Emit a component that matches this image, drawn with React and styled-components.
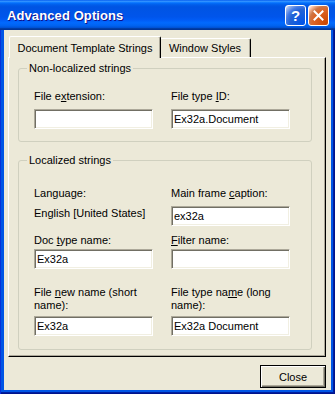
import React from "react";
import styled, { createGlobalStyle } from "styled-components";

const GlobalStyle = createGlobalStyle`
  html, body {
    margin: 0;
    padding: 0;
    background: #ffffff;
  }
  body {
    font-family: "Liberation Sans", Arial, sans-serif;
    font-size: 11px;
    color: #000;
  }
`;

const Window = styled.div`
  width: 335px;
  height: 394px;
  display: flex;
  flex-direction: column;
`;

const TitleBar = styled.div`
  height: 30px;
  box-sizing: border-box;
  display: flex;
  align-items: center;
  padding: 1px 6px 0 7px;
  background: linear-gradient(
    to bottom,
    #0058ee 0%,
    #3593ff 4%,
    #288eff 6%,
    #127dff 8%,
    #036ffc 10%,
    #0262ee 14%,
    #0057e5 20%,
    #0054e3 24%,
    #0055eb 56%,
    #005bf5 66%,
    #026afe 76%,
    #0062ef 86%,
    #0052d6 92%,
    #0040ab 94%,
    #003092 100%
  );
`;

const Title = styled.div`
  flex: 1;
  color: #fff;
  font-family: "Liberation Sans", Arial, sans-serif;
  font-weight: bold;
  font-size: 13px;
  letter-spacing: 0.1px;
  text-shadow: 1px 1px #0f1089;
`;

const CaptionButtons = styled.div`
  display: flex;
  gap: 2px;
`;

const CaptionButton = styled.div`
  width: 21px;
  height: 21px;
  box-sizing: border-box;
  border: 1px solid #fff;
  border-radius: 3px;
  display: flex;
  align-items: center;
  justify-content: center;
  color: #fff;
  font-weight: bold;
  font-size: 15px;
  font-family: "Liberation Sans", Arial, sans-serif;
  background: ${(p) =>
    p.$close
      ? "radial-gradient(circle at 90% 90%, #cc4600 0%, #dc6527 55%, #cd7546 70%, #ffccb2 90%, #fff 100%)"
      : "radial-gradient(circle at 90% 90%, #0054e9 0%, #2263d5 55%, #4479e4 70%, #a3bbec 90%, #fff 100%)"};
`;

const Frame = styled.div`
  flex: 1;
  display: flex;
  padding: 0 4px 4px;
  background: #0055e5;
  box-shadow: inset 1px 0 #0831d9, inset -1px 0 #00138c, inset 0 -1px #00138c,
    inset -2px -2px #001ea0;
`;

const Body = styled.div`
  flex: 1;
  display: flex;
  flex-direction: column;
  background: #ece9d8;
  padding: 6px 5px 0 4px;
`;

const TabStrip = styled.div`
  display: flex;
  align-items: flex-end;
  height: 21px;
  padding-left: 3px;
`;

const Tab = styled.div`
  box-sizing: border-box;
  width: ${(p) => p.$w}px;
  height: ${(p) => (p.$active ? 22 : 19)}px;
  margin: ${(p) => (p.$active ? "0 -2px -1px" : "0")};
  padding-top: ${(p) => (p.$active ? 5 : 3)}px;
  text-align: center;
  line-height: 13px;
  white-space: nowrap;
  background: #ece9d8;
  border-top: 1px solid #fff;
  border-left: 1px solid #fff;
  border-right: 1px solid #000;
  border-radius: 2px 2px 0 0;
  box-shadow: inset -1px 0 #aca899;
  position: relative;
  z-index: ${(p) => (p.$active ? 1 : 0)};
`;

const Panel = styled.div`
  height: 300px;
  box-sizing: border-box;
  border-top: 1px solid #fff;
  border-left: 1px solid #fff;
  border-right: 1px solid #000;
  border-bottom: 1px solid #000;
  box-shadow: inset -1px -1px #aca899;
  padding: 10px 13px 0 9px;
  display: flex;
  flex-direction: column;
`;

const GroupBox = styled.div`
  position: relative;
  border: 1px solid #d0d0bf;
  border-radius: 3px;
  margin-top: ${(p) => p.$mt || 0}px;
  padding: ${(p) => p.$pt}px 0 ${(p) => p.$pb}px 15px;
  display: flex;
  flex-direction: column;
`;

const GroupTitle = styled.span`
  position: absolute;
  top: -7px;
  left: 8px;
  padding: 0 2px;
  line-height: 13px;
  background: #ece9d8;
`;

const Row = styled.div`
  display: grid;
  grid-template-columns: 119px 119px;
  column-gap: 18px;
  align-items: start;
  margin-top: ${(p) => p.$mt || 0}px;
`;

const Field = styled.div`
  display: flex;
  flex-direction: column;
  gap: ${(p) => p.$gap}px;
`;

const Label = styled.label`
  line-height: 13px;
  white-space: nowrap;
  u {
    text-decoration: underline;
  }
`;

const Value = styled.div`
  line-height: 13px;
  white-space: nowrap;
`;

const TextBox = styled.input`
  width: 119px;
  height: 20px;
  box-sizing: border-box;
  margin: 0;
  padding: 0 2px;
  background: #fff;
  border-top: 1px solid #aca899;
  border-left: 1px solid #aca899;
  border-right: 1px solid #fff;
  border-bottom: 1px solid #fff;
  box-shadow: inset 1px 1px #716f64, inset -1px -1px #f1efe2;
  font-family: "Liberation Sans", Arial, sans-serif;
  font-size: 11px;
  color: #000;
  outline: none;
`;

const Footer = styled.div`
  display: flex;
  justify-content: flex-end;
  margin-top: 8px;
`;

const Button = styled.button`
  width: 66px;
  height: 23px;
  box-sizing: border-box;
  padding: 0;
  border: 1px solid #000;
  background: #ece9d8;
  box-shadow: inset 1px 1px #fff, inset -1px -1px #716f64,
    inset -2px -2px #aca899;
  font-family: "Liberation Sans", Arial, sans-serif;
  font-size: 11px;
  color: #000;
`;

const CloseGlyph = () => (
  <svg width="11" height="11" viewBox="0 0 11 11">
    <path d="M1.5 1.5 L9.5 9.5 M9.5 1.5 L1.5 9.5" stroke="#fff" strokeWidth="2" strokeLinecap="square" />
  </svg>
);

const App = () => {
  return (
    <>
      <GlobalStyle />
      <Window>
        <TitleBar>
          <Title>Advanced Options</Title>
          <CaptionButtons>
            <CaptionButton>?</CaptionButton>
            <CaptionButton $close>
              <CloseGlyph />
            </CaptionButton>
          </CaptionButtons>
        </TitleBar>
        <Frame>
          <Body>
            <TabStrip>
              <Tab $active $w={152}>
                Document Template Strings
              </Tab>
              <Tab $w={92}>Window Styles</Tab>
            </TabStrip>
            <Panel>
              <GroupBox $pt={21} $pb={12}>
                <GroupTitle>Non-localized strings</GroupTitle>
                <Row>
                  <Field $gap={6}>
                    <Label>
                      File e<u>x</u>tension:
                    </Label>
                    <TextBox defaultValue="" />
                  </Field>
                  <Field $gap={6}>
                    <Label>
                      File type <u>I</u>D:
                    </Label>
                    <TextBox defaultValue="Ex32a.Document" />
                  </Field>
                </Row>
              </GroupBox>

              <GroupBox $mt={18} $pt={26} $pb={13}>
                <GroupTitle>Localized strings</GroupTitle>
                <Row>
                  <Field $gap={7}>
                    <Label>Language:</Label>
                    <Value>English [United States]</Value>
                  </Field>
                  <Field $gap={6}>
                    <Label>
                      Main frame <u>c</u>aption:
                    </Label>
                    <TextBox defaultValue="ex32a" />
                  </Field>
                </Row>
                <Row $mt={8}>
                  <Field $gap={2}>
                    <Label>
                      Doc <u>t</u>ype name:
                    </Label>
                    <TextBox defaultValue="Ex32a" />
                  </Field>
                  <Field $gap={2}>
                    <Label>
                      <u>F</u>ilter name:
                    </Label>
                    <TextBox defaultValue="" />
                  </Field>
                </Row>
                <Row $mt={17}>
                  <Field $gap={4}>
                    <Label>
                      File <u>n</u>ew name (short
                      <br />
                      name):
                    </Label>
                    <TextBox defaultValue="Ex32a" />
                  </Field>
                  <Field $gap={4}>
                    <Label>
                      File type na<u>m</u>e (long
                      <br />
                      name):
                    </Label>
                    <TextBox defaultValue="Ex32a Document" />
                  </Field>
                </Row>
              </GroupBox>
            </Panel>
            <Footer>
              <Button>Close</Button>
            </Footer>
          </Body>
        </Frame>
      </Window>
    </>
  );
};

export default App;
